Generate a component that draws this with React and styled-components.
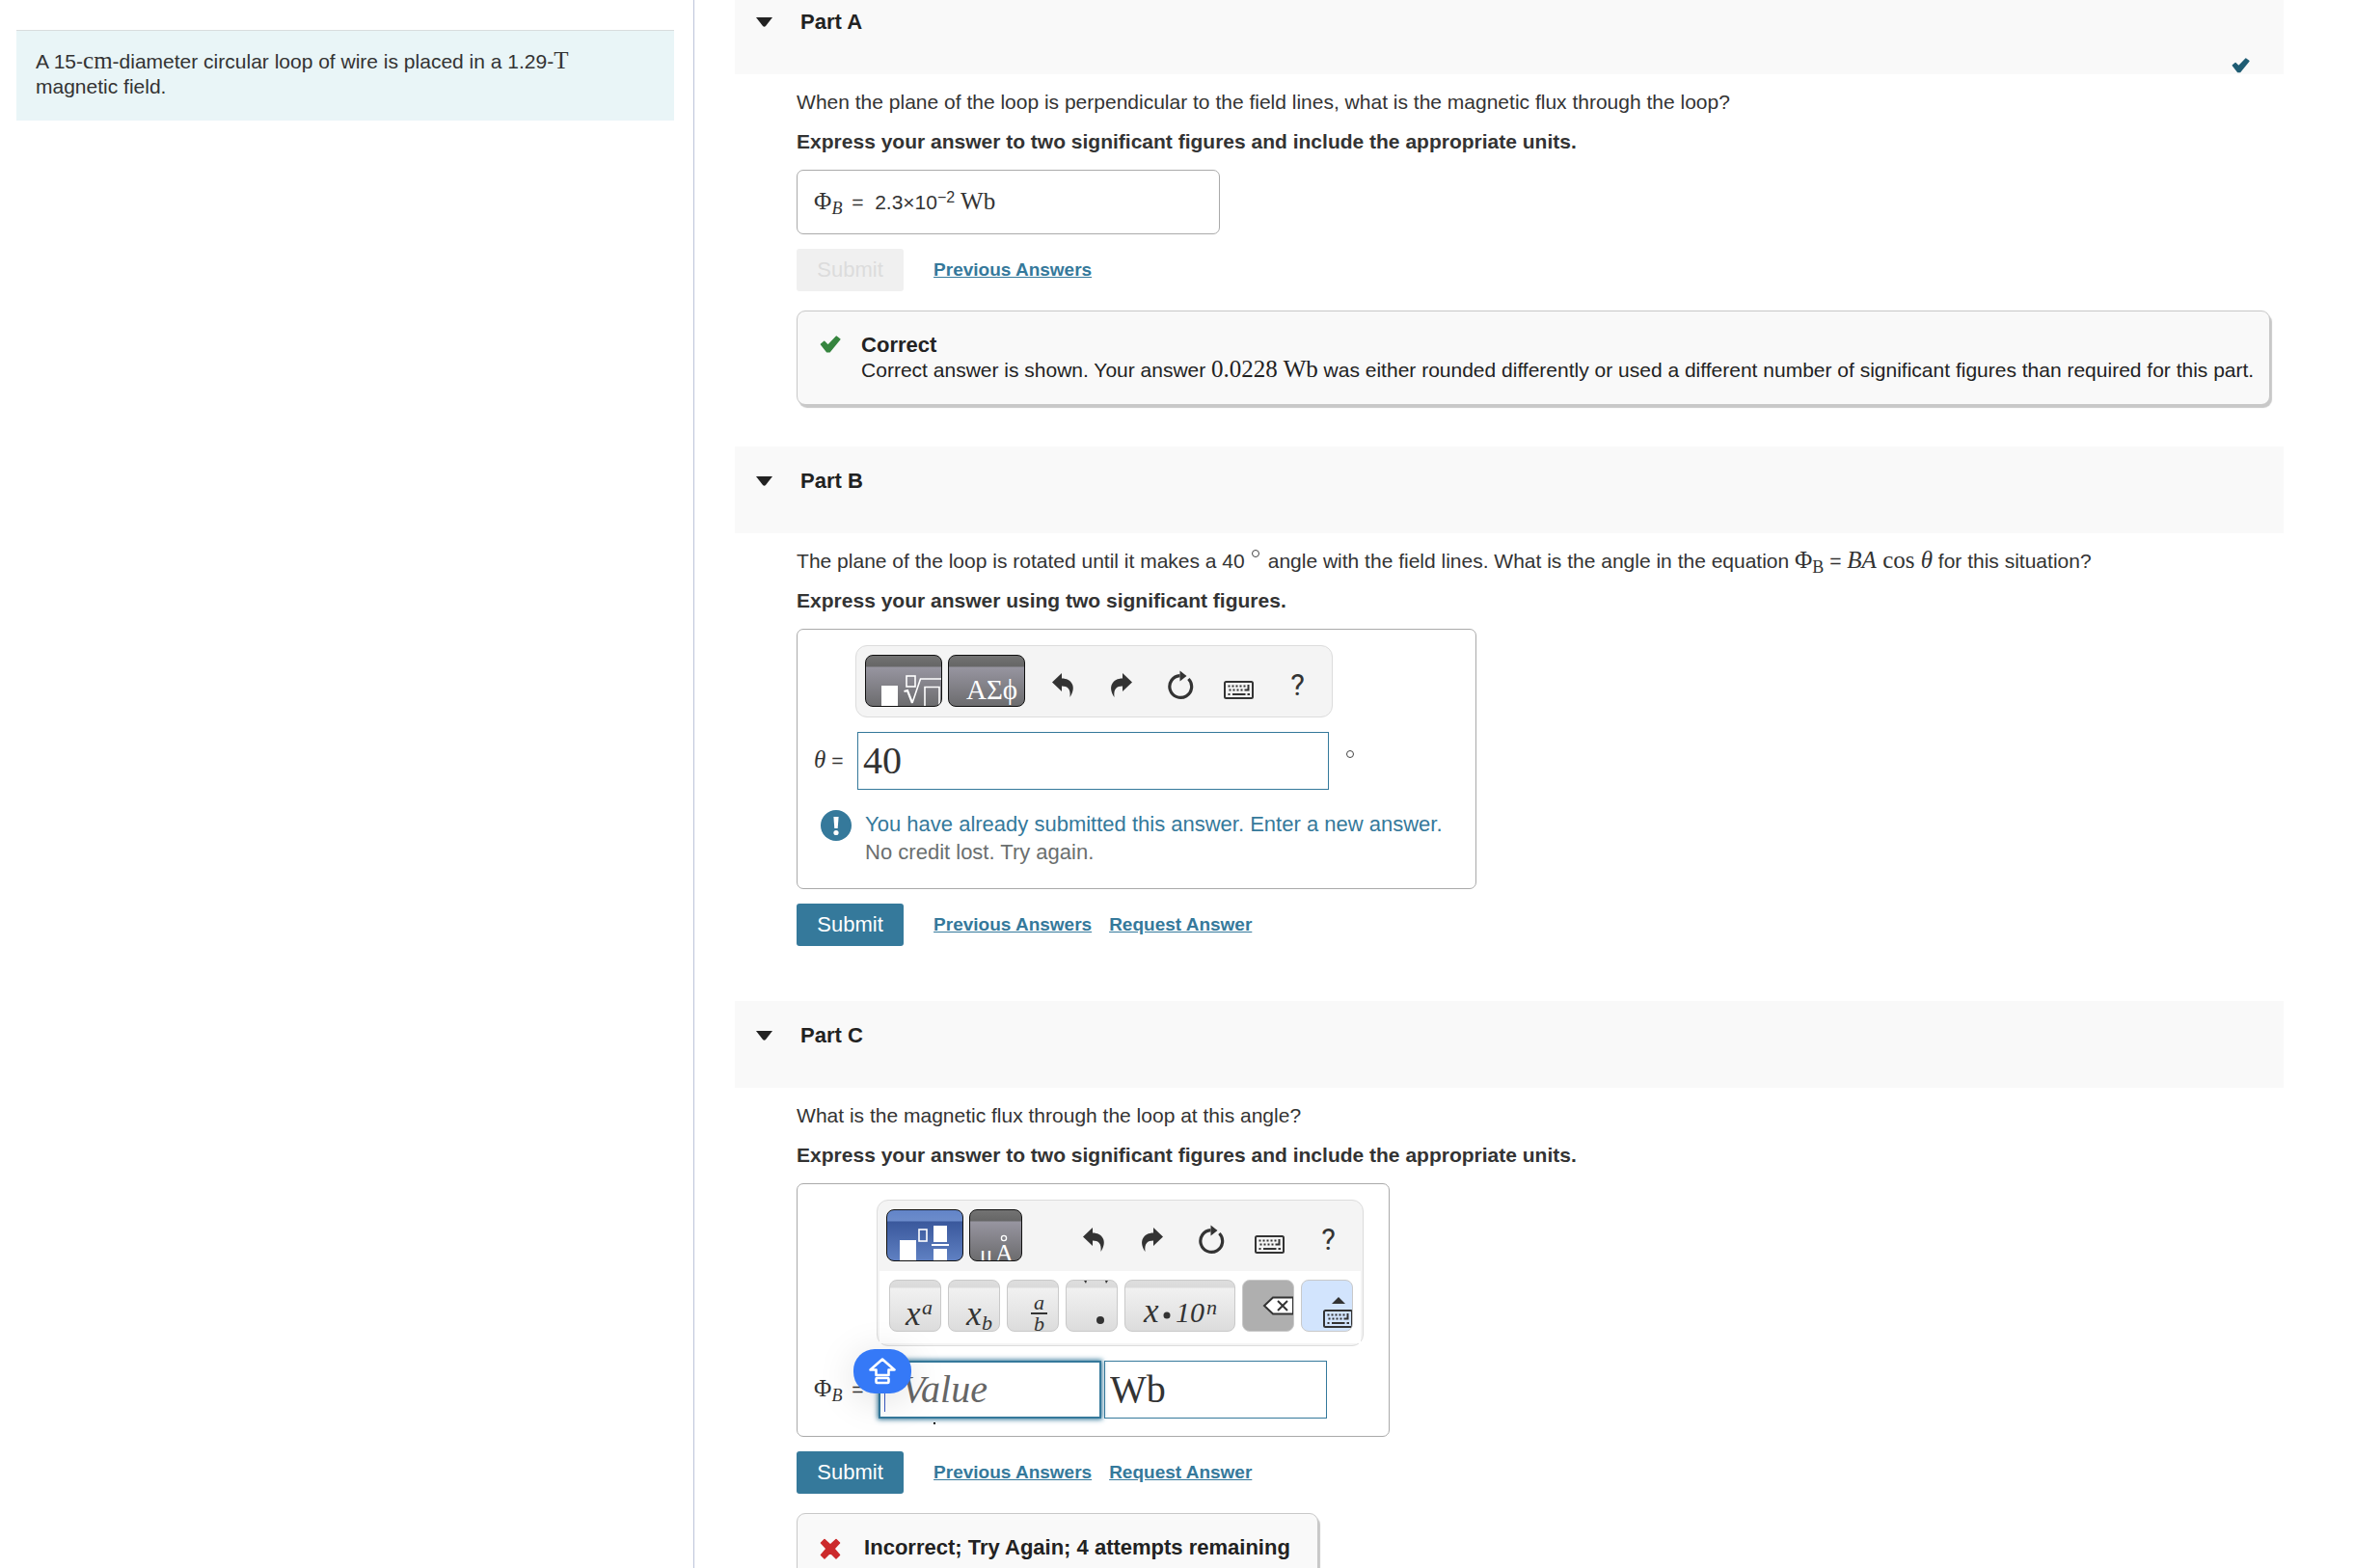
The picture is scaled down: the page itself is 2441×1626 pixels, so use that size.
import { useState } from "react";
import styled, { createGlobalStyle, css } from "styled-components";

const GlobalStyle = createGlobalStyle`
  * {
    box-sizing: border-box;
  }
  body {
    margin: 0;
    background: #fff;
    color: #333;
    font-family: "Liberation Sans", Arial, sans-serif;
    font-size: 21px;
    line-height: 26px;
  }
  button, input {
    font-family: inherit;
    margin: 0;
  }
  button {
    cursor: pointer;
  }
  p, h2 {
    margin: 0;
  }
`;

const serif = `"Liberation Serif", "Times New Roman", serif`;

const Page = styled.div`
  display: flex;
  height: 100vh;
  overflow: hidden;
`;

const Intro = styled.aside`
  width: 29.5%;
  flex-shrink: 0;
  padding: 31px 20px 0 17px;
  border-right: 1px solid #bcc4da;
`;

const IntroCard = styled.div`
  padding: 19px 20px 22px;
  background: #e9f5f7;
  border-top: 1px solid #d9dddd;
`;

const Main = styled.main`
  flex: 1;
  min-width: 0;
  padding: 0 73px 0 42px;
`;

const PartHeader = styled.header`
  display: flex;
  align-items: flex-start;
  height: ${({ $first }) => ($first ? "77px" : "90px")};
  padding: ${({ $first }) => ($first ? "10px" : "23px")} 35px 0 18px;
  background: #f9f9f9;
  color: #222;
  h2 {
    flex: 1;
    font-size: 22px;
    line-height: 26px;
  }
  .status {
    align-self: flex-end;
    margin-bottom: 1px;
  }
`;

const Toggle = styled.button`
  display: flex;
  align-items: center;
  width: 50px;
  height: 26px;
  padding: 0 4px;
  border: 0;
  background: none;
`;

const PartBody = styled.div`
  display: flex;
  flex-direction: column;
  align-items: flex-start;
  padding: 16px 14px ${({ $bottom }) => $bottom || 0}px 64px;
`;

const Question = styled.p`
  margin-bottom: 15px;
`;

const Instruction = styled.p`
  margin-bottom: 16px;
  font-weight: 700;
`;

const AnswerBox = styled.div`
  width: ${({ $width }) => $width}px;
  max-width: 100%;
  padding: ${({ $padding }) => $padding || "16px 17px 18px"};
  border: 1px solid #aaa;
  border-radius: 7px;
`;

const MathText = styled.span`
  font-family: ${serif};
  font-size: 25px;
  line-height: 0;
  i {
    font-family: ${serif};
  }
  sub {
    font-size: 18px;
    vertical-align: -5px;
  }
`;

const Symbol = styled(MathText)`
  margin-right: 4px;
`;

const Sup = styled.sup`
  font-size: 16px;
  line-height: 0;
  vertical-align: 7px;
`;

const Degree = styled.span`
  display: inline-block;
  width: 8px;
  height: 8px;
  margin: ${({ $margin }) => $margin || "0"};
  border: 1px solid #444;
  border-radius: 50%;
  vertical-align: 11px;
`;

const Actions = styled.div`
  display: flex;
  align-items: center;
  margin: 15px 0 20px;
  a {
    color: #35799b;
    font-size: 19px;
    font-weight: 700;
  }
  a:first-of-type {
    margin-left: 31px;
  }
  a + a {
    margin-left: 18px;
  }
`;

const SubmitButton = styled.button`
  width: 111px;
  height: 44px;
  padding: 0;
  border: 0;
  border-radius: 3px;
  background: #35799b;
  color: #fff;
  font-size: 22px;
  &:disabled {
    background: #f0f0f0;
    color: #dcdcdc;
    cursor: default;
  }
`;

const Feedback = styled.div`
  display: flex;
  align-items: flex-start;
  width: ${({ $wide }) => ($wide ? "100%" : "fit-content")};
  min-height: 98px;
  padding: 22px ${({ $wide }) => ($wide ? "8px" : "28px")} 22px 23px;
  border: 1px solid #c8c8c8;
  border-radius: 9px;
  background: #f9f9f9;
  box-shadow: 2px 3px 1px #c8c8c8;
  color: #222;
  svg {
    flex-shrink: 0;
    margin: 3px ${({ $wide }) => ($wide ? "21px" : "24px")} 0 0;
  }
  strong {
    display: block;
    font-size: 22px;
    line-height: 26px;
  }
`;

const Toolbar = styled.div`
  width: ${({ $width }) => $width}px;
  margin-left: ${({ $left }) => $left}px;
  margin-bottom: 15px;
  border: 1px solid #dcdcdc;
  border-radius: 12px;
  background: #f4f4f4;
`;

const ToolRow = styled.div`
  display: flex;
  padding: 9px 9px 10px;
`;

const KeyRow = styled.div`
  display: flex;
  gap: 7px;
  margin: 0 2px 2px;
  padding: 9px 10px 12px;
  background: #fff;
`;

const buttonBase = css`
  display: block;
  flex-shrink: 0;
  height: 54px;
  padding: 0;
  overflow: hidden;
  svg {
    display: block;
  }
`;

const GroupButton = styled.button`
  ${buttonBase}
  width: ${({ $width }) => $width}px;
  margin-right: 6px;
  border: 1px solid #111;
  border-radius: 8px;
  background: ${({ $active }) =>
    $active
      ? "linear-gradient(#6284c8, #6c8ccb 11px, #3a589c 12px, #5f80c2)"
      : "linear-gradient(#737373, #666 11px, #9795a0 12px, #6c6c6e)"};
`;

const IconButton = styled.button`
  ${buttonBase}
  width: 61px;
  padding: 8px 0 0;
  border: 0;
  background: none;
  color: #333;
  font-family: Roboto, sans-serif;
  font-size: 31px;
  svg {
    margin: 0 auto;
  }
`;

const IconGroup = styled.div`
  display: flex;
  margin-left: ${({ $left }) => $left}px;
`;

const keyTones = {
  plain: "linear-gradient(#dedede, #dadada 7px, #f1f1f1 8px, #dcdcdc)",
  dark: "#afafaf",
  blue: "#d2e4fd",
};

const Key = styled.button`
  ${buttonBase}
  width: ${({ $width }) => $width || 54}px;
  border: 1px solid #c9c9c9;
  border-radius: 8px;
  background: ${({ $tone }) => keyTones[$tone || "plain"]};
`;

const FieldRow = styled.div`
  display: flex;
  align-items: center;
  label {
    flex-shrink: 0;
    width: ${({ $label }) => $label}px;
    white-space: pre;
  }
`;

const Field = styled.input`
  width: ${({ $width }) => $width}px;
  height: 60px;
  padding: 0 5px 2px;
  border: 1px solid #35799b;
  border-radius: 0;
  background: #fff;
  color: #333;
  font-family: ${serif};
  font-size: 40px;
  outline: none;
`;

const ValueField = styled(Field)`
  display: block;
  padding-left: 22px;
  border-width: 2px;
  box-shadow: 0 0 5px 1px #35799b;
  &::placeholder {
    color: #666;
    font-style: italic;
    opacity: 1;
  }
`;

const ValueWrap = styled.div`
  position: relative;
  margin-right: 3px;
`;

const Caret = styled.span`
  position: absolute;
  top: 10px;
  left: 6px;
  width: 1px;
  height: 43px;
  background: #3d5cc4;
`;

const TinyMark = styled.span`
  position: absolute;
  left: 57px;
  bottom: -6px;
  width: 2px;
  height: 2px;
  background: #000;
`;

const CapsBadge = styled.span`
  position: absolute;
  top: -12px;
  left: -26px;
  display: flex;
  align-items: center;
  justify-content: center;
  width: 60px;
  height: 46px;
  border-radius: 22px;
  background: #3579f7;
  box-shadow: 0 6px 40px rgba(0, 0, 0, 0.13);
`;

const Alert = styled.div`
  display: flex;
  gap: 14px;
  padding: 21px 0 5px 7px;
  font-size: 22px;
  line-height: 29px;
  color: #6b6f6f;
  svg {
    flex-shrink: 0;
  }
  p {
    white-space: nowrap;
  }
  p:first-child {
    color: #35799b;
  }
`;

const CheckIcon = ({ color, size = 22, ...rest }) => (
  <svg width={size} height={(size * 18) / 22} viewBox="0 0 22 18" {...rest}>
    <path
      d="M1.5 9 4.7 6.4 8.6 10.2 17.2 1.2 20.8 3.8 10.2 16.8H7.6Z"
      fill={color}
      stroke={color}
      strokeWidth="1.6"
      strokeLinejoin="round"
    />
  </svg>
);

const CrossIcon = () => (
  <svg width="22" height="22" viewBox="0 0 22 22">
    <path
      d="M5 1.5 11 7 17 1.5 20.5 5 15 11 20.5 17.5 17 21 11 15 5 21 1.5 17.5 7 11 1.5 5Z"
      fill="#cc2a2c"
      stroke="#cc2a2c"
      strokeWidth="1.5"
      strokeLinejoin="round"
    />
  </svg>
);

const UndoIcon = ({ flip }) => (
  <svg width="32" height="32" viewBox="0 0 32 32">
    <path
      transform={flip ? "matrix(-1 0 0 1 32 0)" : undefined}
      d="M5 13.5 15 4V9.5C25 9.5 31 18 23.5 29 24.5 20 21 17.5 15 17.5V23Z"
      fill="#333"
    />
  </svg>
);

const ResetIcon = () => (
  <svg width="32" height="32" viewBox="0 0 32 32">
    <path
      d="M24.4 10A11.4 11.4 0 1 1 15.5 6.6"
      fill="none"
      stroke="#333"
      strokeWidth="3.2"
    />
    <path d="M15.5 1.5 22.5 7 15.5 12.5Z" fill="#333" />
  </svg>
);

const KeyboardShape = () => (
  <g>
    <rect x="1" y="1" width="29" height="17" rx="1.5" fill="none" stroke="#333" strokeWidth="2" />
    <path d="M4.5 5.5H22.5M5.5 9.5H21.5" stroke="#333" strokeWidth="2" strokeDasharray="2 2" />
    <path
      d="M25.5 4V9.5H21.5M9 14H22.5M4.5 14H6.5M24.5 14H27"
      fill="none"
      stroke="#333"
      strokeWidth="2"
    />
  </g>
);

const KeyboardIcon = () => (
  <svg width="32" height="32" viewBox="0 0 32 32">
    <g transform="translate(0 12)">
      <KeyboardShape />
    </g>
  </svg>
);

const RootIcon = () => (
  <svg width="78" height="52" viewBox="0 0 78 52">
    <rect x="16" y="31" width="17" height="21" fill="#fff" />
    <g fill="none" stroke="#fff">
      <rect x="42" y="21" width="9" height="11" strokeWidth="1.6" />
      <path d="M39.5 37 43 36 48 49" strokeWidth="2.2" />
      <path d="M48 49 56.5 24H78" strokeWidth="1.6" />
      <path d="M61 52V32.5H76V52" strokeWidth="1.6" />
    </g>
  </svg>
);

const GreekIcon = () => (
  <svg width="78" height="52" viewBox="0 0 78 52">
    <text x="18" y="45" fill="#fff" fontFamily="Liberation Serif, serif" fontSize="29">
      ΑΣϕ
    </text>
  </svg>
);

const TemplateIcon = () => (
  <svg width="78" height="52" viewBox="0 0 78 52">
    <g fill="#fff">
      <rect x="13" y="31" width="17" height="21" />
      <rect x="48" y="16" width="14" height="17" />
      <rect x="46" y="35" width="18" height="2" />
      <rect x="48" y="40" width="14" height="12" />
    </g>
    <rect x="33" y="20" width="8" height="12" fill="none" stroke="#fff" strokeWidth="1.6" />
  </svg>
);

const UnitsIcon = () => (
  <svg width="53" height="52" viewBox="0 0 53 52">
    <text x="10" y="54" fill="#fff" fontFamily="Liberation Serif, serif" fontSize="25">
      μ
    </text>
    <text x="26" y="53" fill="#fff" fontFamily="Liberation Serif, serif" fontSize="26">
      A
    </text>
    <circle cx="35" cy="29" r="2.6" fill="none" stroke="#fff" strokeWidth="1.3" />
  </svg>
);

// math glyph drawn on a keypad key, set in italic serif
const KeyGlyph = ({ width = 52, children }) => (
  <svg
    width={width}
    height="52"
    viewBox={`0 0 ${width} 52`}
    fill="#333"
    fontFamily="Liberation Serif, serif"
    fontStyle="italic"
    fontSize="35"
  >
    {children}
  </svg>
);

const CapsIcon = () => (
  <svg width="28" height="28" viewBox="0 0 28 28" fill="none" stroke="#fff" strokeWidth="2.6" strokeLinejoin="round">
    <path d="M14 1.5 26.5 12.5H20.5V18H7.5V12.5H1.5Z" />
    <rect x="7.5" y="21" width="13" height="5" rx="1" />
  </svg>
);

const EditTools = ({ left }) => (
  <IconGroup $left={left}>
    <IconButton aria-label="undo">
      <UndoIcon />
    </IconButton>
    <IconButton aria-label="redo">
      <UndoIcon flip />
    </IconButton>
    <IconButton aria-label="reset">
      <ResetIcon />
    </IconButton>
    <IconButton aria-label="keyboard shortcuts">
      <KeyboardIcon />
    </IconButton>
    <IconButton aria-label="help">?</IconButton>
  </IconGroup>
);

const Header = ({ title, first, done }) => (
  <PartHeader $first={first}>
    <Toggle aria-label={`Toggle ${title}`}>
      <svg width="17" height="10" viewBox="0 0 17 10">
        <path d="M0 0H17L10 9Q8.5 10.5 7 9Z" fill="#222" />
      </svg>
    </Toggle>
    <h2>{title}</h2>
    {done && <CheckIcon className="status" color="#1f5c73" size={19} />}
  </PartHeader>
);

const SubmitRow = ({ disabled, request }) => (
  <Actions>
    <SubmitButton disabled={disabled}>Submit</SubmitButton>
    <a href="#previous">Previous Answers</a>
    {request && <a href="#request">Request Answer</a>}
  </Actions>
);

const PhiB = () => (
  <Symbol>
    Φ
    <sub>
      <i>B</i>
    </sub>
  </Symbol>
);

const App = () => {
  const [theta, setTheta] = useState("40");
  const [value, setValue] = useState("");
  const [units, setUnits] = useState("Wb");

  return (
    <Page>
      <GlobalStyle />
      <Intro>
        <IntroCard>
          A 15-<MathText>cm</MathText>-diameter circular loop of wire is placed
          in a 1.29-<MathText>T</MathText> <br />
          magnetic field.
        </IntroCard>
      </Intro>

      <Main>
        {/* part A */}
        <section>
          <Header title="Part A" first done />
          <PartBody $bottom={43}>
            <Question>
              When the plane of the loop is perpendicular to the field lines,
              what is the magnetic flux through the loop?
            </Question>
            <Instruction>
              Express your answer to two significant figures and include the
              appropriate units.
            </Instruction>
            <AnswerBox $width={439} $padding="20px 17px 19px">
              <PhiB /> =&nbsp; 2.3×10<Sup>−2</Sup> <MathText>Wb</MathText>
            </AnswerBox>
            <SubmitRow disabled />
            <Feedback $wide>
              <CheckIcon color="#36853f" />
              <div>
                <strong>Correct</strong>
                <p>
                  Correct answer is shown. Your answer{" "}
                  <MathText>0.0228 Wb</MathText> was either rounded differently
                  or used a different number of significant figures than
                  required for this part.
                </p>
              </div>
            </Feedback>
          </PartBody>
        </section>

        {/* part B */}
        <section>
          <Header title="Part B" />
          <PartBody $bottom={37}>
            <Question>
              The plane of the loop is rotated until it makes a 40
              <Degree $margin="0 9px 0 7px" />
              angle with the field lines. What is the angle in the equation{" "}
              <MathText>
                Φ<sub>B</sub>
              </MathText>{" "}
              ={" "}
              <MathText>
                <i>BA</i> cos <i>θ</i>
              </MathText>{" "}
              for this situation?
            </Question>
            <Instruction>
              Express your answer using two significant figures.
            </Instruction>
            <AnswerBox $width={705}>
              <Toolbar $width={495} $left={43}>
                <ToolRow>
                  <GroupButton $width={80} aria-label="templates">
                    <RootIcon />
                  </GroupButton>
                  <GroupButton $width={80} aria-label="symbols">
                    <GreekIcon />
                  </GroupButton>
                  <EditTools left={2} />
                </ToolRow>
              </Toolbar>
              <FieldRow $label={45}>
                <label htmlFor="theta">
                  <MathText>
                    <i>θ</i>
                  </MathText>{" "}
                  =
                </label>
                <Field
                  id="theta"
                  $width={489}
                  value={theta}
                  onChange={(e) => setTheta(e.target.value)}
                />
                <Degree $margin="0 0 14px 18px" />
              </FieldRow>
              <Alert>
                <svg width="32" height="32" viewBox="0 0 32 32">
                  <circle cx="16" cy="16" r="16" fill="#35799b" />
                  <path d="M13.4 7H18.6L17.7 19H14.3Z" fill="#fff" />
                  <circle cx="16" cy="23.5" r="2.6" fill="#fff" />
                </svg>
                <div>
                  <p>You have already submitted this answer. Enter a new answer.</p>
                  <p>No credit lost. Try again.</p>
                </div>
              </Alert>
            </AnswerBox>
            <SubmitRow request />
          </PartBody>
        </section>

        {/* part C */}
        <section>
          <Header title="Part C" />
          <PartBody>
            <Question>What is the magnetic flux through the loop at this angle?</Question>
            <Instruction>
              Express your answer to two significant figures and include the
              appropriate units.
            </Instruction>
            <AnswerBox $width={615}>
              <Toolbar $width={505} $left={65}>
                <ToolRow>
                  <GroupButton $width={80} $active aria-label="templates">
                    <TemplateIcon />
                  </GroupButton>
                  <GroupButton $width={55} aria-label="units">
                    <UnitsIcon />
                  </GroupButton>
                  <EditTools left={37} />
                </ToolRow>
                <KeyRow>
                  <Key aria-label="superscript">
                    <KeyGlyph>
                      <text x="16" y="46">x</text>
                      <text x="33" y="35" fontSize="22">a</text>
                    </KeyGlyph>
                  </Key>
                  <Key aria-label="subscript">
                    <KeyGlyph>
                      <text x="18" y="46">x</text>
                      <text x="34" y="51" fontSize="22">b</text>
                    </KeyGlyph>
                  </Key>
                  <Key aria-label="fraction">
                    <KeyGlyph>
                      <text x="27" y="30" fontSize="22">a</text>
                      <rect x="24" y="33" width="17" height="2" />
                      <text x="27" y="52" fontSize="22">b</text>
                    </KeyGlyph>
                  </Key>
                  <Key aria-label="multiplication dot">
                    <KeyGlyph>
                      <path d="M18 0H21L20 3ZM40 0H43L41 3Z" />
                      <circle cx="35" cy="41" r="4" />
                    </KeyGlyph>
                  </Key>
                  <Key $width={115} aria-label="scientific notation">
                    <KeyGlyph width={113}>
                      <text x="19" y="43">x</text>
                      <circle cx="43" cy="36" r="3.5" />
                      <text x="52" y="43" fontSize="30">10</text>
                      <text x="84" y="35" fontSize="22">n</text>
                    </KeyGlyph>
                  </Key>
                  <Key $tone="dark" aria-label="delete">
                    <svg width="52" height="52" viewBox="0 0 52 52">
                      <path
                        d="M52 17.5H31L22 26 31 34.5H52Z"
                        fill="#fff"
                        stroke="#333"
                        strokeWidth="2"
                      />
                      <path d="M36 21 46 31M46 21 36 31" stroke="#333" strokeWidth="2" />
                    </svg>
                  </Key>
                  <Key $tone="blue" aria-label="hide keypad">
                    <svg width="52" height="52" viewBox="0 0 52 52">
                      <path d="M31 24 38 17 45 24Z" fill="#333" />
                      <g transform="translate(22 30)">
                        <KeyboardShape />
                      </g>
                    </svg>
                  </Key>
                </KeyRow>
              </Toolbar>
              <FieldRow $label={67}>
                <label htmlFor="flux">
                  <PhiB /> =
                </label>
                <ValueWrap>
                  <ValueField
                    id="flux"
                    $width={231}
                    placeholder="Value"
                    value={value}
                    onChange={(e) => setValue(e.target.value)}
                  />
                  <Caret />
                  <TinyMark />
                  <CapsBadge>
                    <CapsIcon />
                  </CapsBadge>
                </ValueWrap>
                <Field
                  aria-label="Units"
                  $width={231}
                  value={units}
                  onChange={(e) => setUnits(e.target.value)}
                />
              </FieldRow>
            </AnswerBox>
            <SubmitRow request />
            <Feedback>
              <CrossIcon />
              <strong>Incorrect; Try Again; 4 attempts remaining</strong>
            </Feedback>
          </PartBody>
        </section>
      </Main>
    </Page>
  );
};

export default App;
